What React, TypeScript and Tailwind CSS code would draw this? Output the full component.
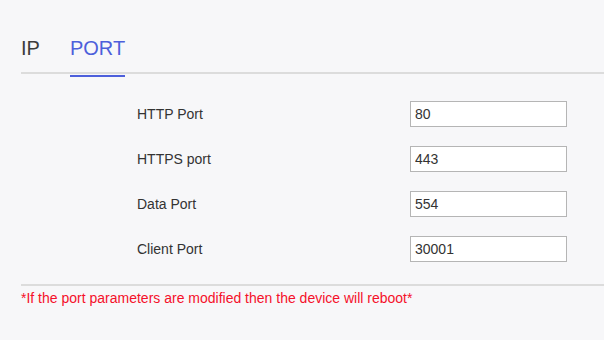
import { useState } from "react";

type PortField = {
  id: string;
  label: string;
  value: string;
};

const fields: PortField[] = [
  { id: "http", label: "HTTP Port", value: "80" },
  { id: "https", label: "HTTPS port", value: "443" },
  { id: "data", label: "Data Port", value: "554" },
  { id: "client", label: "Client Port", value: "30001" },
];

export default function App() {
  const [values, setValues] = useState<Record<string, string>>(
    Object.fromEntries(fields.map((f) => [f.id, f.value]))
  );

  return (
    <div className="h-[340px] w-[604px] overflow-hidden bg-[#f7f7f9] pl-[21px] font-['Liberation_Sans',Arial,sans-serif]">
      <div className="flex h-[74px] items-start gap-[30px] border-b-2 border-[#dcdcdc] pt-[36px]">
        <button className="text-[20px] leading-[24px] text-[#3c3c3c]">IP</button>
        <button className="relative h-[38px] text-[20px] leading-[24px] text-[#4d5fdb] self-stretch items-start flex">
          PORT
          <span className="absolute -bottom-[3px] left-0 right-0 h-[2px] bg-[#4d5fdb]" />
        </button>
      </div>

      <div className="flex flex-col gap-[19px] pt-[27px] pb-[22px] pl-[116px]">
        {fields.map((field) => (
          <div key={field.id} className="flex h-[26px] items-center">
            <label htmlFor={field.id} className="w-[273px] text-[14px] text-[#333]">
              {field.label}
            </label>
            <input
              id={field.id}
              value={values[field.id]}
              onChange={(e) => setValues({ ...values, [field.id]: e.target.value })}
              className="h-[26px] w-[157px] border border-[#b5b5b5] bg-white px-[4px] text-[14px] text-[#333] outline-none"
            />
          </div>
        ))}
      </div>

      <div className="border-t-2 border-[#dcdcdc] pt-[4px] text-[14px] leading-[16px] text-[#f5102a]">
        *If the port parameters are modified then the device will reboot*
      </div>
    </div>
  );
}
